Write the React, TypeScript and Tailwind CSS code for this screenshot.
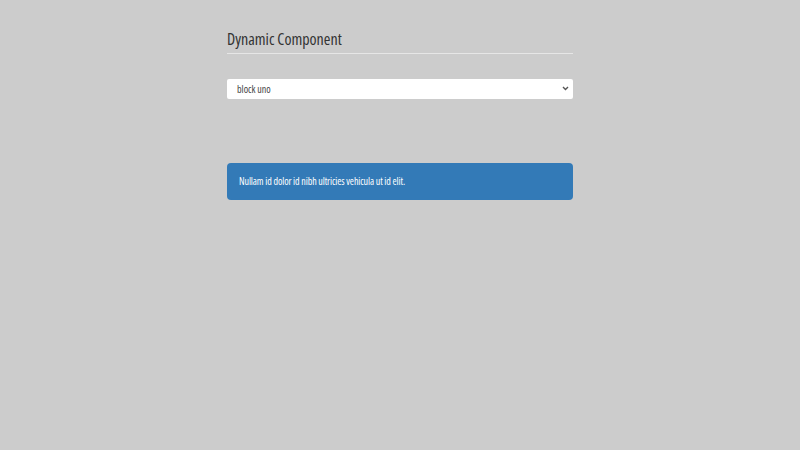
const font = "font-['Open_Sans',sans-serif] font-stretch-condensed";

export default function App() {
    return (
        <div className={`min-h-screen w-full bg-[#cccccc] ${font}`}>
            <div className="mx-auto w-[346px] pt-[28px]">
                <h1 className="text-[16px] leading-[22px] font-normal text-[#333] pb-[3px] border-b border-[#e6e6e6]">
                    Dynamic Component
                </h1>

                <div className="relative mt-[25px]">
                    <select className="appearance-none block w-full h-[20px] bg-white text-[10px] text-[#444] pl-[10px] pr-[16px] border-0 rounded-[2px] outline-none">
                        <option>block uno</option>
                        <option>block dos</option>
                        <option>block tres</option>
                    </select>
                    {/* chevron for the native select */}
                    <svg
                        className="pointer-events-none absolute right-[4px] top-[7px] w-[7px] h-[5px]"
                        viewBox="0 0 7 5"
                        fill="none"
                        stroke="#555"
                        strokeWidth="1.4"
                    >
                        <path d="M1 1l2.5 2.5L6 1" />
                    </svg>
                </div>

                <div className="mt-[64px] h-[37px] flex items-center px-[12px] bg-[#337ab7] rounded-[4px] text-white text-[10px] font-normal tracking-[-0.1px]">
                    Nullam id dolor id nibh ultricies vehicula ut id elit.
                </div>
            </div>
        </div>
    );
}
